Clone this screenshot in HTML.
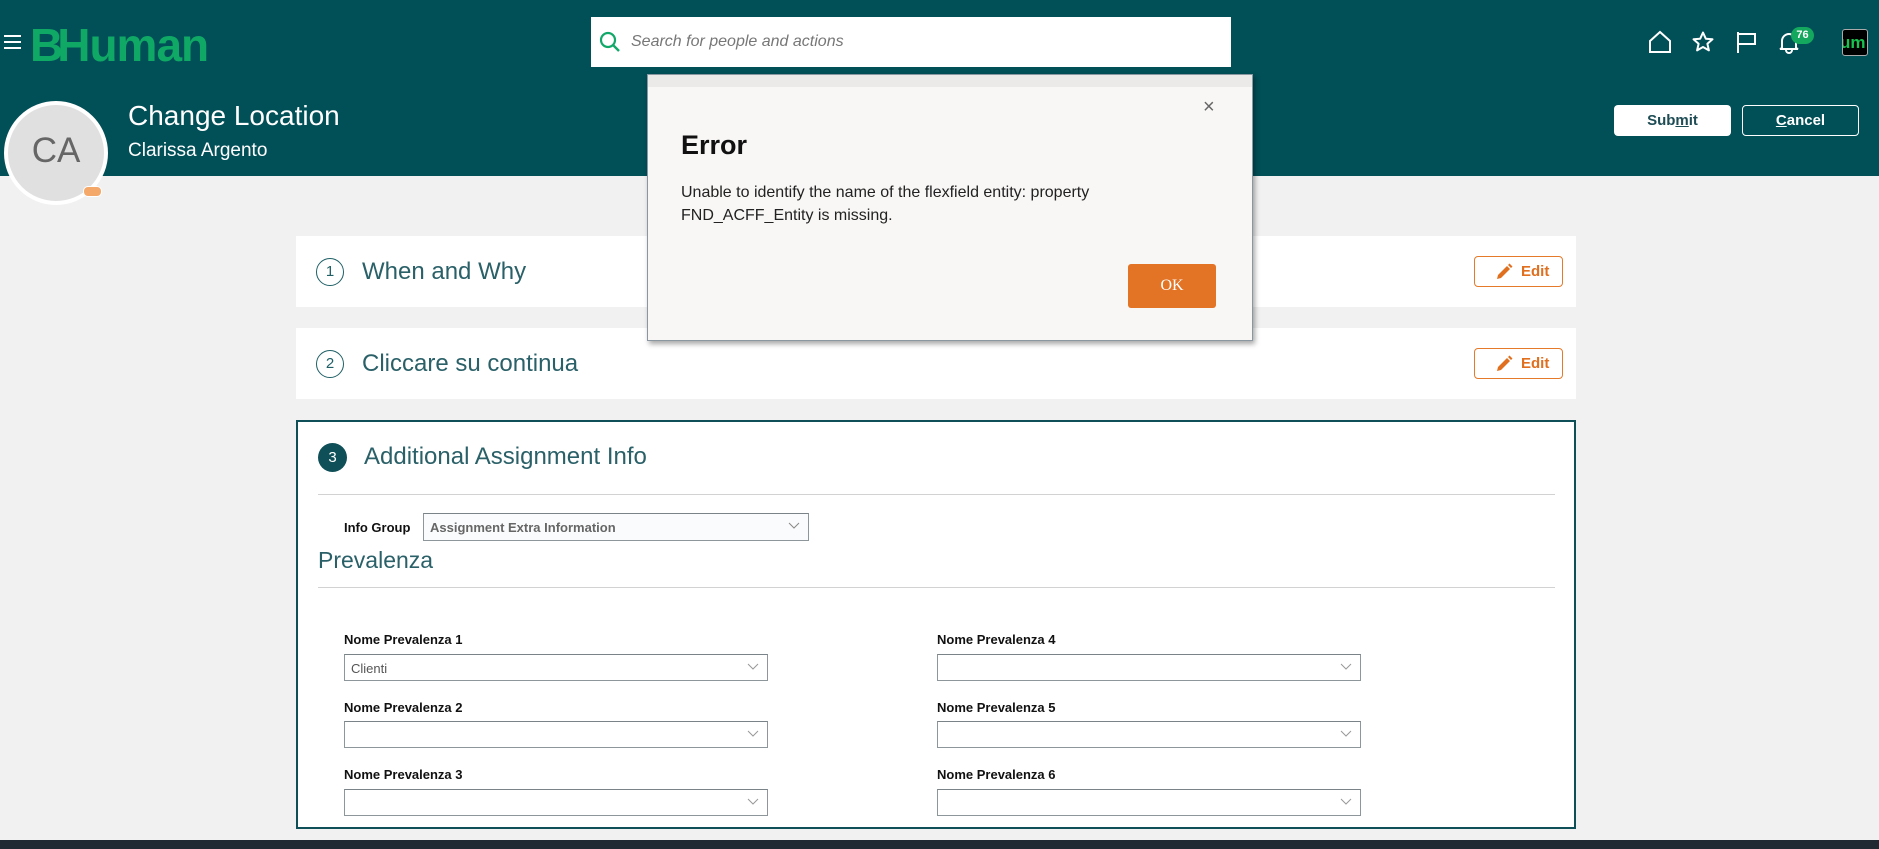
<!DOCTYPE html>
<html><head><meta charset="utf-8"><style>
*{box-sizing:border-box;margin:0;padding:0}
body{width:1879px;height:849px;overflow:hidden;background:#f1f1f1;font-family:"Liberation Sans",sans-serif;position:relative}
.a{position:absolute}
.hdr{left:0;top:0;width:1879px;height:176px;background:#014f57}
.card{background:#fff;left:296px;width:1280px}
.num{width:28px;height:28px;border:1.5px solid #1e5f66;border-radius:50%;color:#1e5f66;font-size:15px;text-align:center;line-height:25px}
.ttl{color:#2a6068;font-size:24px;font-weight:300}
.edit{width:89px;height:31px;border:1px solid #e57a2b;border-radius:4px;color:#e0701f;font-size:15px;font-weight:bold;padding:6px 0 0 46px}
.lbl{font-size:13px;font-weight:bold;color:#111}
.sel{height:27px;background:#fff;border:1px solid #8d969b;border-top-color:#7a8388;border-left:1px solid #8d969b;width:424px;font-size:13px;color:#555;padding:6px 6px}
.chev{position:absolute;right:8px;top:8px}
</style></head><body>
<div class="a hdr"></div>
<div class="a" style="left:4px;top:35px;width:17px;height:2px;background:#fff"></div>
<div class="a" style="left:4px;top:41px;width:17px;height:2px;background:#fff"></div>
<div class="a" style="left:4px;top:47px;width:17px;height:2px;background:#fff"></div>
<div class="a" style="left:30px;top:18px;font-size:46px;font-weight:bold;color:#0fa865;letter-spacing:-1px"><span style="letter-spacing:-6px">B</span>Human</div>
<div class="a" style="left:591px;top:17px;width:640px;height:50px;background:#fff"></div>
<svg class="a" style="left:598px;top:30px" width="24" height="24" viewBox="0 0 24 24"><circle cx="10" cy="10" r="7" fill="none" stroke="#12a86a" stroke-width="2.2"/><path d="M15 15l6 6" stroke="#12a86a" stroke-width="2.4"/></svg>
<div class="a" style="left:631px;top:33px;font-size:16px;font-style:italic;color:#777">Search for people and actions</div>
<svg class="a" style="left:1648px;top:30px" width="24" height="24" viewBox="0 0 24 24" fill="none" stroke="#fff" stroke-width="2"><path d="M2 11L12 2l10 9v11H2z"/></svg>
<svg class="a" style="left:1691px;top:30px" width="24" height="24" viewBox="0 0 24 24" fill="none" stroke="#fff" stroke-width="2" stroke-linejoin="round"><path d="M12 2.5l2.8 6.2 6.7.6-5.1 4.5 1.5 6.6L12 17l-5.9 3.4 1.5-6.6-5.1-4.5 6.7-.6z"/></svg>
<svg class="a" style="left:1735px;top:30px" width="24" height="24" viewBox="0 0 24 24" fill="none" stroke="#fff" stroke-width="2"><path d="M3 2v21M3 4h17v10H3"/></svg>
<svg class="a" style="left:1778px;top:30px" width="22" height="24" viewBox="0 0 22 24" fill="none" stroke="#fff" stroke-width="2"><path d="M4 18V11a7 7 0 0114 0v7l2 1H2z M8 20a3 3 0 006 0"/></svg>
<div class="a" style="left:1791px;top:27px;width:23px;height:17px;border-radius:9px;background:#14a85e;color:#fff;font-size:11px;font-weight:bold;text-align:center;line-height:17px">76</div>
<div class="a" style="left:1842px;top:29px;width:26px;height:27px;background:#000;border:1px solid #aaa;border-radius:3px;color:#18c24f;font-size:17px;font-weight:bold;overflow:hidden;line-height:25px;text-indent:-3px">um</div>
<div class="a" style="left:4px;top:101px;width:104px;height:104px;border-radius:50%;background:#e0e0e0;border:4px solid #fff"></div>
<div class="a" style="left:4px;top:131px;width:104px;text-align:center;font-size:35px;color:#666">CA</div>
<div class="a" style="left:83px;top:186px;width:19px;height:11px;border-radius:5px;background:#f4a86a;border:1px solid #fff"></div>
<div class="a" style="left:128px;top:100px;font-size:28px;color:#fff">Change Location</div>
<div class="a" style="left:128px;top:140px;font-size:19px;color:#fff">Clarissa Argento</div>
<div class="a" style="left:1614px;top:105px;width:117px;height:31px;background:#fff;border-radius:4px;color:#1e4c55;font-size:15px;font-weight:bold;text-align:center;line-height:31px">Sub<u>m</u>it</div>
<div class="a" style="left:1742px;top:105px;width:117px;height:31px;border:1px solid #fff;border-radius:4px;color:#fff;font-size:15px;font-weight:bold;text-align:center;line-height:29px"><u>C</u>ancel</div>
<div class="a card" style="top:236px;height:71px"></div>
<div class="a num" style="left:316px;top:258px">1</div>
<div class="a ttl" style="left:362px;top:258px">When and Why</div>
<div class="a edit" style="left:1474px;top:256px">Edit</div>
<svg class="a" style="left:1495px;top:263px" width="18" height="18" viewBox="0 0 18 18"><path d="M2 16l1-4 9-9 3 3-9 9z M13 2l1.5-1.5 3 3L16 5z" fill="#e0701f"/></svg>
<div class="a card" style="top:328px;height:71px"></div>
<div class="a num" style="left:316px;top:350px">2</div>
<div class="a ttl" style="left:362px;top:350px">Cliccare su continua</div>
<div class="a edit" style="left:1474px;top:348px">Edit</div>
<svg class="a" style="left:1495px;top:355px" width="18" height="18" viewBox="0 0 18 18"><path d="M2 16l1-4 9-9 3 3-9 9z M13 2l1.5-1.5 3 3L16 5z" fill="#e0701f"/></svg>
<div class="a card" style="top:420px;height:409px;border:2px solid #0f4f57"></div>
<div class="a" style="left:318px;top:443px;width:29px;height:29px;border-radius:50%;background:#0f4f57;color:#fff;font-size:15px;text-align:center;line-height:29px">3</div>
<div class="a ttl" style="left:364px;top:443px">Additional Assignment Info</div>
<div class="a" style="left:318px;top:494px;width:1237px;height:1px;background:#d2d2d2"></div>
<div class="a lbl" style="left:344px;top:520px">Info Group</div>
<div class="a sel" style="left:423px;top:513px;width:386px;height:28px;background:#fafbfc;font-weight:bold;color:#666">Assignment Extra Information<svg class="chev" width="12" height="8" viewBox="0 0 12 8"><path d="M1 1l5 5 5-5" fill="none" stroke="#888"/></svg></div>
<div class="a" style="left:318px;top:547px;font-size:23px;font-weight:300;color:#2a6068">Prevalenza</div>
<div class="a" style="left:318px;top:587px;width:1237px;height:1px;background:#d2d2d2"></div>
<div class="a lbl" style="left:344px;top:632px">Nome Prevalenza 1</div>
<div class="a sel" style="left:344px;top:654px">Clienti<svg class="chev" width="12" height="8" viewBox="0 0 12 8"><path d="M1 1l5 5 5-5" fill="none" stroke="#999"/></svg></div>
<div class="a lbl" style="left:344px;top:700px">Nome Prevalenza 2</div>
<div class="a sel" style="left:344px;top:721px"><svg class="chev" width="12" height="8" viewBox="0 0 12 8"><path d="M1 1l5 5 5-5" fill="none" stroke="#999"/></svg></div>
<div class="a lbl" style="left:344px;top:767px">Nome Prevalenza 3</div>
<div class="a sel" style="left:344px;top:789px"><svg class="chev" width="12" height="8" viewBox="0 0 12 8"><path d="M1 1l5 5 5-5" fill="none" stroke="#999"/></svg></div>
<div class="a lbl" style="left:937px;top:632px">Nome Prevalenza 4</div>
<div class="a sel" style="left:937px;top:654px"><svg class="chev" width="12" height="8" viewBox="0 0 12 8"><path d="M1 1l5 5 5-5" fill="none" stroke="#999"/></svg></div>
<div class="a lbl" style="left:937px;top:700px">Nome Prevalenza 5</div>
<div class="a sel" style="left:937px;top:721px"><svg class="chev" width="12" height="8" viewBox="0 0 12 8"><path d="M1 1l5 5 5-5" fill="none" stroke="#999"/></svg></div>
<div class="a lbl" style="left:937px;top:767px">Nome Prevalenza 6</div>
<div class="a sel" style="left:937px;top:789px"><svg class="chev" width="12" height="8" viewBox="0 0 12 8"><path d="M1 1l5 5 5-5" fill="none" stroke="#999"/></svg></div>
<div class="a" style="left:0;top:840px;width:1879px;height:9px;background:#1f2a33"></div>
<div class="a" style="left:647px;top:74px;width:606px;height:267px;background:#f8f7f5;border:1px solid #8a96a0;box-shadow:2px 3px 5px rgba(0,0,0,.35)"></div>
<div class="a" style="left:648px;top:75px;width:604px;height:12px;background:#ebeae8"></div>
<div class="a" style="left:1203px;top:96px;font-size:20px;color:#666">×</div>
<div class="a" style="left:681px;top:130px;font-size:27px;font-weight:bold;color:#111">Error</div>
<div class="a" style="left:681px;top:181px;font-size:16px;color:#222;line-height:23px">Unable to identify the name of the flexfield entity: property<br>FND_ACFF_Entity is missing.</div>
<div class="a" style="left:1128px;top:264px;width:88px;height:44px;background:#e37325;border-radius:3px;color:#fff;font-family:'Liberation Serif',serif;font-size:16px;text-align:center;line-height:44px">OK</div>
</body></html>
